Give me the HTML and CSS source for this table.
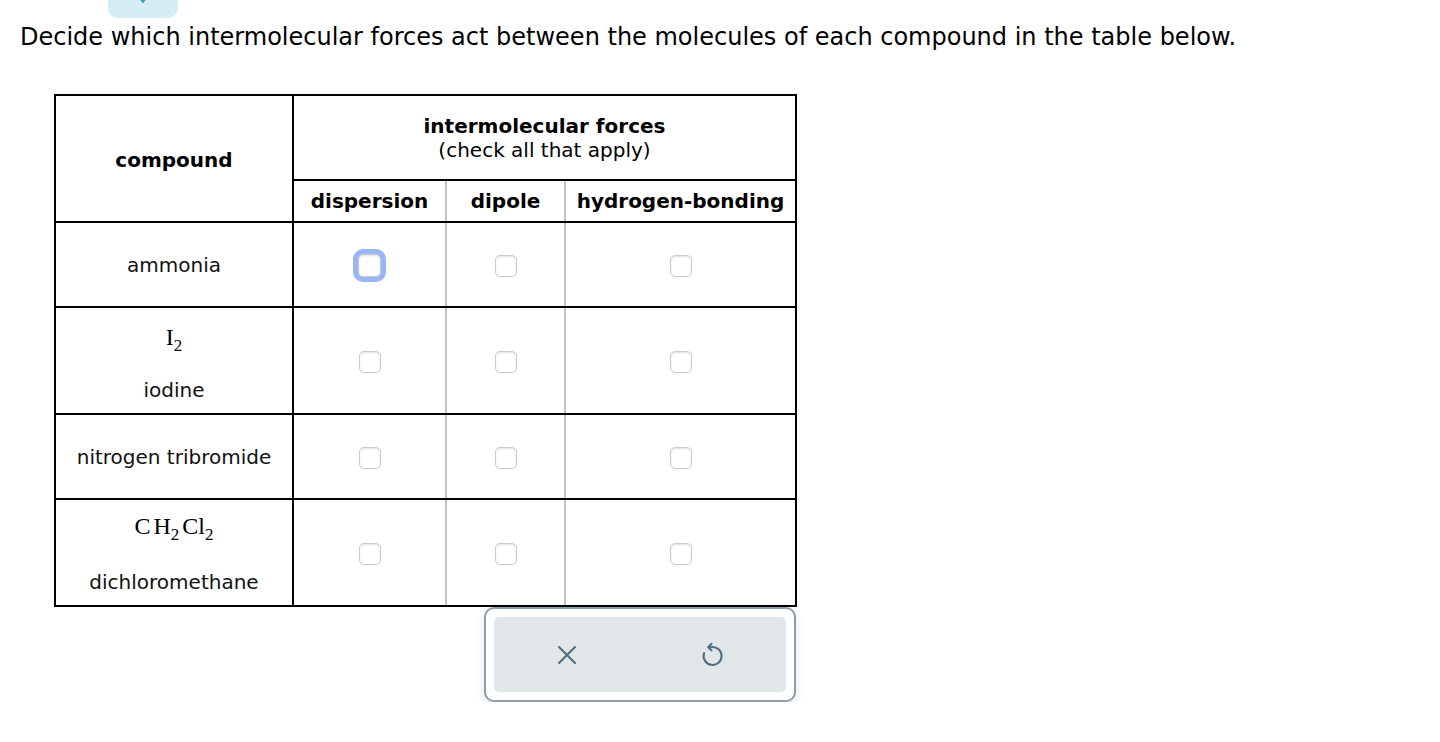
FILE: index.html
```html
<!DOCTYPE html>
<html lang="en">
<head>
<meta charset="utf-8">
<title>Intermolecular forces</title>
<link rel="stylesheet" href="styles.css">
</head>
<body>
<div class="tab">
  <svg class="tab-icon" width="16" height="6" viewBox="0 0 16 6"><path d="M2 -4 L8 3.5 L14 -4 Z" fill="#3a9fc4"/></svg>
</div>
<p class="prompt">Decide which intermolecular forces act between the molecules of each compound in the table below.</p>
<div class="wrap">
  <table class="grid">
    <colgroup>
      <col class="c-compound">
      <col class="c-disp">
      <col class="c-dip">
      <col class="c-hb">
    </colgroup>
    <tr class="h1">
      <th rowspan="2" class="bk-r head-compound">compound</th>
      <th colspan="3">intermolecular forces<br><span class="sub-head">(check all that apply)</span></th>
    </tr>
    <tr class="h2">
      <th class="gr-r">dispersion</th>
      <th class="gr-r">dipole</th>
      <th>hydrogen-bonding</th>
    </tr>
    <tr class="r1">
      <td class="name bk-r">ammonia</td>
      <td class="gr-r"><span class="cb focus"></span></td>
      <td class="gr-r"><span class="cb"></span></td>
      <td><span class="cb"></span></td>
    </tr>
    <tr class="r2">
      <td class="name bk-r"><div class="formula">I<sub>2</sub></div><div class="cname">iodine</div></td>
      <td class="gr-r"><span class="cb"></span></td>
      <td class="gr-r"><span class="cb"></span></td>
      <td><span class="cb"></span></td>
    </tr>
    <tr class="r3">
      <td class="name bk-r">nitrogen tribromide</td>
      <td class="gr-r"><span class="cb"></span></td>
      <td class="gr-r"><span class="cb"></span></td>
      <td><span class="cb"></span></td>
    </tr>
    <tr class="r4">
      <td class="name bk-r"><div class="formula">C<span class="sp">H<sub>2</sub></span><span class="sp">Cl<sub>2</sub></span></div><div class="cname">dichloromethane</div></td>
      <td class="gr-r"><span class="cb"></span></td>
      <td class="gr-r"><span class="cb"></span></td>
      <td><span class="cb"></span></td>
    </tr>
  </table>
  <div class="panel">
    <div class="panel-inner">
      <button class="btn" type="button" aria-label="Clear">
        <svg class="icon-x" width="20" height="20" viewBox="0 0 20 20" fill="none" stroke="#4e6c79" stroke-width="2" stroke-linecap="round"><path d="M2 2 L18 18 M18 2 L2 18"/></svg>
      </button>
      <button class="btn" type="button" aria-label="Undo">
        <svg width="24" height="24" viewBox="0 0 24 24" fill="none" stroke="#4e6c79" stroke-width="2" stroke-linecap="round" stroke-linejoin="round"><path d="M9.5 4.2 A9 9 0 1 1 3.1 10"/><path d="M10.5 0.8 L7.2 4.2 L10.5 7.4"/></svg>
      </button>
    </div>
  </div>
</div>
</body>
</html>
```

FILE: styles.css
```css
html, body {
  margin: 0;
  padding: 0;
  background: #fff;
}
body {
  font-family: "DejaVu Sans", Verdana, sans-serif;
  color: #000;
}
.tab {
  margin-left: 108px;
  width: 70px;
  height: 18px;
  background: #d4eef4;
  border-radius: 0 0 10px 10px;
  display: flex;
  justify-content: center;
  align-items: flex-start;
}
.tab-icon {
  display: block;
}
.prompt {
  margin: 5px 0 0 20px;
  font-size: 24px;
  line-height: 28px;
}
.wrap {
  margin: 43px 0 0 54px;
}
.grid {
  border-collapse: collapse;
  table-layout: fixed;
  border: 2px solid #000;
  font-size: 20px;
}
.c-compound { width: 238px; }
.c-disp { width: 153px; }
.c-dip { width: 119px; }
.c-hb { width: 231px; }
.grid th, .grid td {
  padding: 0;
  text-align: center;
  vertical-align: middle;
  border-top: 2px solid #000;
  border-bottom: 2px solid #000;
}
.grid th {
  font-weight: bold;
  line-height: 24px;
}
.grid .head-compound {
  padding-top: 3px;
}
.sub-head {
  font-weight: normal;
}
.bk-r { border-right: 2px solid #000; }
.gr-r { border-right: 2px solid #c2c2c2; }
.h1 { height: 85px; }
.h2 { height: 42px; }
.r1 { height: 85px; }
.r2 { height: 107px; }
.r3 { height: 85px; }
.r4 { height: 107px; }
.name {
  line-height: 24px;
  color: #111;
}
.r2 .name {
  padding-top: 4px;
}
.formula {
  font-family: "Liberation Serif", "Times New Roman", serif;
  font-size: 24px;
  line-height: 28px;
  margin-bottom: 27px;
  color: #000;
}
.r4 .formula {
  margin-bottom: 30px;
}
.formula sub {
  font-size: 17px;
  line-height: 0;
  vertical-align: -6px;
}
.formula .sp {
  margin-left: 3px;
}
.cname {
  line-height: 24px;
}
.cb {
  display: inline-block;
  vertical-align: middle;
  box-sizing: border-box;
  width: 22px;
  height: 22px;
  border: 1px solid #cacaca;
  border-radius: 5px;
  background: #fff;
  box-shadow: inset 0 1px 2px rgba(0, 0, 0, 0.12);
}
.cb.focus {
  width: 23px;
  height: 23px;
  border: 1px solid #c9c9c9;
  box-shadow: 0 0 0 5px #98b6f5, inset 0 1px 2px rgba(0, 0, 0, 0.12);
  border-radius: 5px;
}
.panel {
  margin: 0 0 0 430px;
  width: 312px;
  height: 95px;
  box-sizing: border-box;
  border: 2px solid #8c9fa9;
  border-radius: 10px;
  padding: 8px;
  background: #fff;
  box-shadow: 0 3px 8px rgba(0, 0, 0, 0.12);
}
.panel-inner {
  height: 100%;
  background: #e1e6e9;
  border-radius: 5px;
  display: flex;
  align-items: center;
}
.btn {
  flex: 1;
  height: 100%;
  border: 0;
  background: transparent;
  padding: 0;
  display: flex;
  align-items: center;
  justify-content: center;
  cursor: pointer;
}
.btn svg {
  display: block;
}
```
